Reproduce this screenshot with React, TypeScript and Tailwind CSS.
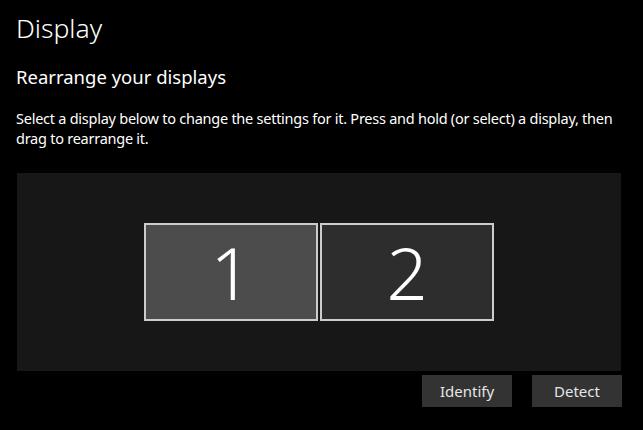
const font = { fontFamily: '"Noto Sans", "Open Sans", sans-serif' }

const Monitor = ({ n, active }: { n: string; active?: boolean }) => {
  return (
    <div
      className={`w-[174px] h-[98px] border-2 border-[#cccccc] flex items-center justify-center ${
        active ? 'bg-[#4c4c4c]' : 'bg-[#2d2d2d]'
      }`}
    >
      <span className="text-[72px] font-light leading-none text-white">{n}</span>
    </div>
  )
}

const App = () => {
  return (
    <div className="w-[643px] h-[430px] bg-black text-white overflow-hidden" style={font}>
      <div className="pl-4 pt-[8px]">
        <h1 className="text-[26.5px] font-light leading-[40px]">Display</h1>
        <h2 className="text-[18.5px] leading-[28px] mt-[15px]">Rearrange your displays</h2>
        <p className="text-[14.5px] tracking-[-0.25px] leading-[20px] mt-[17px]">
          Select a display below to change the settings for it. Press and hold (or select) a display, then drag to
          rearrange it.
        </p>
      </div>
      <div className="ml-[17px] mt-[25px] w-[604px] h-[198px] bg-[#171717] flex items-center justify-center gap-[2px]">
        <Monitor n="1" active />
        <Monitor n="2" />
      </div>
      <div className="flex justify-end gap-5 pr-[21px] mt-[4px]">
        <button className="w-[90px] h-[32px] bg-[#333333] text-[15px] text-[#e6e6e6]">Identify</button>
        <button className="w-[90px] h-[32px] bg-[#333333] text-[15px] text-[#e6e6e6]">Detect</button>
      </div>
    </div>
  )
}

export default App
